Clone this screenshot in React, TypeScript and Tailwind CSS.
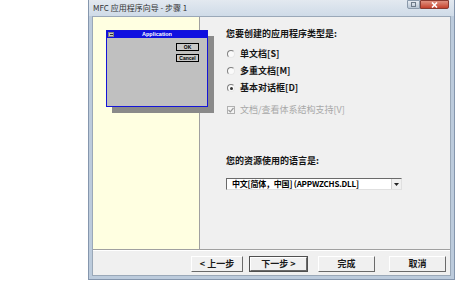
import React from "react";

function Radio({ checked }: { checked?: boolean }) {
  return (
    <span className="relative w-[8px] h-[8px] rounded-full border border-t-[#808080] border-l-[#808080] border-r-[#e8e8e8] border-b-[#e8e8e8] bg-[#fafafa] flex items-center justify-center shrink-0">
      {checked ? <span className="w-[3px] h-[3px] rounded-full bg-[#333]" /> : null}
    </span>
  );
}

function Btn({ label, def }: { label: string; def?: boolean }) {
  return (
    <div
      className={
        "h-[16px] flex " +
        (def ? "border border-[#505050]" : "")
      }
    >
      <div className="flex-1 flex items-center justify-center bg-[#f0f0f0] border-t border-l border-t-white border-l-white border-r border-b border-r-[#6a6a6a] border-b-[#6a6a6a] text-[9px] leading-[10px] font-bold text-[#1a1a1a]">
        {label}
      </div>
    </div>
  );
}

export default function App() {
  return (
    <div className="w-[474px] h-[284px] bg-white flex font-['Noto_Sans_CJK_SC','Noto_Sans',sans-serif]">
      <div className="ml-[88px] w-[367px] h-[280px] flex flex-col bg-[#bccbdc] border-x border-b border-[#8596ad]">
        {/* title bar */}
        <div className="h-[16px] flex items-start bg-gradient-to-b from-[#e3e9f0] to-[#cfdbe8]">
          <span className="ml-[4px] mt-[2px] text-[8px] leading-[11px] text-[#333]">
            MFC 应用程序向导 - 步骤 1
          </span>
          <div className="ml-auto mr-[5px] flex">
            <div className="w-[13px] h-[9px] bg-gradient-to-b from-[#e6ecf2] to-[#b9c6d4] border border-[#8b9aab] rounded-bl-[2px] flex items-center justify-center">
              <span className="w-[5px] h-[5px] border border-[#6d7a88]" />
            </div>
            <div className="w-[29px] h-[9px] bg-gradient-to-b from-[#e0907f] to-[#c4402c] border border-[#8a3a30] rounded-br-[2px] flex items-center justify-center">
              <svg width="7" height="6" viewBox="0 0 7 6">
                <path d="M1 0.5 L6 5.5 M6 0.5 L1 5.5" stroke="white" strokeWidth="1.6" />
              </svg>
            </div>
          </div>
        </div>
        {/* body */}
        <div className="flex-1 mx-[3px] mb-[3px] flex flex-col bg-[#f0f0f0] border border-[#9aa8b8]">
          <div className="flex h-[232px]">
            {/* yellow panel */}
            <div className="relative w-[107px] bg-[#ffffe1] border-r border-[#a0a0a0]">
              <div className="absolute left-[13px] top-[13px] w-[102px] h-[77px] shadow-[6px_6px_0_#8a8a8a]">
                <div className="w-full h-full flex flex-col border border-[#1414d8] bg-[#c0c0c0]">
                  <div className="h-[7px] bg-[#1010e0] flex items-center relative">
                    <span className="ml-[1px] w-[6px] h-[5px] bg-[#c8c8c8] border border-[#808080] flex items-center justify-center">
                      <span className="w-[3px] h-[1px] bg-[#333]" />
                    </span>
                    <span className="absolute left-0 right-0 text-center text-[5.5px] leading-[7px] font-bold text-white font-['Liberation_Sans',sans-serif]">
                      Application
                    </span>
                  </div>
                  <div className="flex-1 flex flex-col items-end pr-[8px] pt-[5px] gap-[3px]">
                    <div className="w-[23px] h-[8px] border border-black bg-[#c8c8c8] flex items-center justify-center text-[5px] leading-[6px] font-bold text-black font-['Liberation_Sans',sans-serif]">
                      OK
                    </div>
                    <div className="w-[23px] h-[8px] border border-black bg-[#c8c8c8] flex items-center justify-center text-[5px] leading-[6px] font-bold text-black font-['Liberation_Sans',sans-serif]">
                      Cancel
                    </div>
                  </div>
                </div>
              </div>
            </div>
            {/* right panel */}
            <div className="flex-1 flex flex-col pl-[26px] text-[9px] leading-[12px] font-bold text-[#151515]">
              <div className="mt-[11px]">您要创建的应用程序类型是:</div>
              <div className="mt-[8px] flex flex-col gap-[5px]">
                <div className="h-[12px] flex items-center gap-[5px] pl-[1px]">
                  <Radio />
                  <span>单文档[S]</span>
                </div>
                <div className="h-[12px] flex items-center gap-[5px] pl-[1px]">
                  <Radio />
                  <span>多重文档[M]</span>
                </div>
                <div className="h-[12px] flex items-center gap-[5px] pl-[1px]">
                  <Radio checked />
                  <span>基本对话框[D]</span>
                </div>
              </div>
              <div className="mt-[10px] h-[12px] flex items-center gap-[5px] pl-[1px] text-[#a8a8a8] font-normal">
                <span className="w-[8px] h-[8px] border border-[#b0b0b0] bg-[#f4f4f4] flex items-center justify-center shrink-0">
                  <svg width="6" height="6" viewBox="0 0 6 6">
                    <path d="M0.5 3 L2.3 4.8 L5.5 1" stroke="#9a9a9a" strokeWidth="1.2" fill="none" />
                  </svg>
                </span>
                <span>文档/查看体系结构支持[V]</span>
              </div>
              <div className="mt-[39px]">您的资源使用的语言是:</div>
              <div className="mt-[11px] w-[176px] h-[12px] flex bg-white border border-t-[#6a6a6a] border-l-[#6a6a6a] border-r-[#e0e0e0] border-b-[#e0e0e0]">
                <span className="flex-1 pl-[5px] text-[8px] leading-[10px] text-black tracking-[-0.2px]">
                  中文[简体，中国] (APPWZCHS.DLL]
                </span>
                <span className="w-[10px] h-full bg-[#f0f0f0] border-l border-[#d0d0d0] flex items-center justify-center">
                  <svg width="5" height="3" viewBox="0 0 5 3">
                    <path d="M0 0 H5 L2.5 3 Z" fill="#222" />
                  </svg>
                </span>
              </div>
            </div>
          </div>
          {/* separator */}
          <div className="h-[2px] border-t border-[#a0a0a0] border-b border-b-white" />
          {/* button row */}
          <div className="flex-1 flex items-start pt-[5px] pl-[98px]">
            <div className="w-[52px]">
              <Btn label="< 上一步" />
            </div>
            <div className="w-[59px] ml-[6px]">
              <Btn label="下一步 >" def />
            </div>
            <div className="w-[57px] ml-[10px]">
              <Btn label="完成" />
            </div>
            <div className="w-[57px] ml-[14px]">
              <Btn label="取消" />
            </div>
          </div>
        </div>
      </div>
    </div>
  );
}
